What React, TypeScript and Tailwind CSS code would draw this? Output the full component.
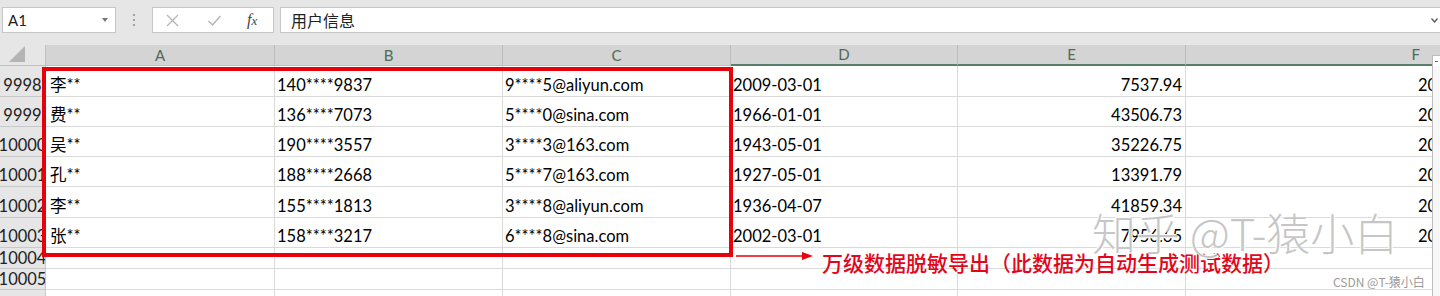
import React from 'react'

// Excel-like sheet with masked user data, a red highlight box and a caption

const rows = [
  { n: '9998', a: '李**', b: '140****9837', c: '9****5@aliyun.com', d: '2009-03-01', e: '7537.94', h: 'h-[31px]' },
  { n: '9999', a: '费**', b: '136****7073', c: '5****0@sina.com', d: '1966-01-01', e: '43506.73', h: 'h-[30px]' },
  { n: '10000', a: '吴**', b: '190****3557', c: '3****3@163.com', d: '1943-05-01', e: '35226.75', h: 'h-[30px]' },
  { n: '10001', a: '孔**', b: '188****2668', c: '5****7@163.com', d: '1927-05-01', e: '13391.79', h: 'h-[30px]' },
  { n: '10002', a: '李**', b: '155****1813', c: '3****8@aliyun.com', d: '1936-04-07', e: '41859.34', h: 'h-[31px]' },
  { n: '10003', a: '张**', b: '158****3217', c: '6****8@sina.com', d: '2002-03-01', e: '7956.65', h: 'h-[30px]' },
]

const emptyRows = [
  { n: '10004', h: 'h-[21px]' },
  { n: '10005', h: 'h-[21px]' },
  { n: '', h: 'h-[21px]' },
]

const cell = 'flex items-end shrink-0 border-r border-b border-[#dadada] px-[2px] pb-[1px] leading-[20px] whitespace-nowrap overflow-hidden'

function HeaderCell({ label, w, green }: { label: string; w: string; green?: boolean }) {
  return (
    <div
      className={`${w} shrink-0 h-full flex items-center justify-center bg-[#d4d4d4] border-r border-[#bcbcbc] text-[#4e6b59] text-[15px] ${
        green ? 'border-b-2 border-b-[#56806a]' : 'border-b border-b-[#c0c0c0]'
      }`}
    >
      {label}
    </div>
  )
}

export default function App() {
  return (
    <div className="relative w-[1440px] h-[296px] overflow-hidden bg-[#e6e6e6] font-[Lato,'Noto_Sans_CJK_SC',sans-serif] text-[16.5px] text-black">
      {/* --- Formula bar --- */}
      <div className="h-[45px] flex items-start pt-[7px] pl-[2px] text-[16px]">
        <div className="w-[114px] h-[26px] bg-white border border-[#c6c6c6] flex items-center justify-between pl-[5px] pr-[7px]">
          <span className="text-[15px] text-[#222]">A1</span>
          <svg width="6" height="4" viewBox="0 0 6 4">
            <path d="M0 0 L6 0 L3 4 Z" fill="#777" />
          </svg>
        </div>
        <div className="w-[36px] h-[26px] flex flex-col items-center justify-center gap-[3px]">
          <span className="w-[2px] h-[2px] bg-[#a0a0a0]" />
          <span className="w-[2px] h-[2px] bg-[#a0a0a0]" />
          <span className="w-[2px] h-[2px] bg-[#a0a0a0]" />
        </div>
        <div className="w-[122px] h-[26px] bg-white border border-[#c6c6c6] flex items-center pl-[12px]">
          <svg width="15" height="15" viewBox="0 0 15 15" className="mr-[27px]">
            <path d="M2 2 L13 13 M13 2 L2 13" stroke="#b5b5b5" strokeWidth="1.3" />
          </svg>
          <svg width="15" height="15" viewBox="0 0 15 15" className="mr-[25px]">
            <path d="M1.5 8 L5.5 12 L13.5 3" stroke="#b5b5b5" strokeWidth="1.5" fill="none" />
          </svg>
          <span className="font-['Liberation_Serif',serif] italic text-[16px] text-[#444] leading-none">
            f<span className="text-[13px]">x</span>
          </span>
        </div>
        <div className="ml-[6px] flex-1 h-[26px] bg-white border-y border-l border-[#c6c6c6] flex items-center justify-between pl-[10px] pr-[2px]">
          <span className="font-['Noto_Sans_CJK_SC',sans-serif] text-[16px] text-[#222]">用户信息</span>
          <svg width="7" height="5" viewBox="0 0 7 5">
            <path d="M0.5 0.5 L3.5 4 L6.5 0.5" stroke="#555" strokeWidth="1.2" fill="none" />
          </svg>
        </div>
      </div>

      {/* --- Column headers --- */}
      <div className="flex h-[21px]">
        <div className="w-[46px] shrink-0 h-full bg-[#e6e6e6] border-r border-b border-[#c0c0c0] flex items-end justify-end pr-[20px] pb-[3px]">
          <svg width="16" height="16" viewBox="0 0 16 16">
            <path d="M16 0 L16 16 L0 16 Z" fill="#b4b4b4" />
          </svg>
        </div>
        <HeaderCell label="A" w="w-[229px]" />
        <HeaderCell label="B" w="w-[228px]" />
        <HeaderCell label="C" w="w-[228px]" />
        <HeaderCell label="D" w="w-[227px]" green />
        <HeaderCell label="E" w="w-[228px]" green />
        <div className="w-[246px] shrink-0 h-full flex items-center justify-end pr-[12px] bg-[#d4d4d4] border-b-2 border-b-[#56806a] text-[#4e6b59] text-[15px]">
          F
        </div>
        <div className="flex-1 h-full bg-[#d4d4d4] flex items-end">
          <div className="w-full h-[11px] bg-white border-l border-t border-[#bdbdbd] flex items-center justify-center">
            <span className="w-[3px] h-[1px] bg-[#666]" />
          </div>
        </div>
      </div>

      {/* --- Data rows --- */}
      {rows.map((r) => (
        <div key={r.n} className={`flex ${r.h} bg-white`}>
          <div className="w-[46px] shrink-0 h-full bg-[#e6e6e6] border-r border-b border-[#c8c8c8] flex items-end justify-center pb-[1px] leading-[20px] overflow-hidden text-[#222]">
            <span className="whitespace-nowrap">{r.n}</span>
          </div>
          <div className={`${cell} w-[229px] pl-[4px]`}>{r.a}</div>
          <div className={`${cell} w-[228px]`}>{r.b}</div>
          <div className={`${cell} w-[228px]`}>{r.c}</div>
          <div className={`${cell} w-[227px]`}>{r.d}</div>
          <div className={`${cell} w-[228px] justify-end pr-[3px]`}>{r.e}</div>
          <div className={`${cell} w-[246px] border-r-0 pl-[232px]`}>2021-06-12</div>
          <div className="flex-1 h-full bg-[#f7f7f7] border-l border-[#bdbdbd]" />
        </div>
      ))}
      {emptyRows.map((r, i) => (
        <div key={i} className={`flex ${r.h} bg-white`}>
          <div className="w-[46px] shrink-0 h-full bg-[#e6e6e6] border-r border-b border-[#c8c8c8] flex items-end justify-center leading-[20px] overflow-hidden text-[#222]">
            <span className="whitespace-nowrap">{r.n}</span>
          </div>
          <div className={`${cell} w-[229px]`} />
          <div className={`${cell} w-[228px]`} />
          <div className={`${cell} w-[228px]`} />
          <div className={`${cell} w-[227px]`} />
          <div className={`${cell} w-[228px]`} />
          <div className={`${cell} w-[246px] border-r-0`} />
          <div className="flex-1 h-full bg-[#f7f7f7] border-l border-[#bdbdbd]" />
        </div>
      ))}

      {/* --- Red highlight box --- */}
      <div className="absolute left-[42px] top-[67px] w-[691px] h-[190px] border-4 border-[#e8000b] pointer-events-none" />

      {/* --- Arrow + caption --- */}
      <svg className="absolute left-[736px] top-[250px]" width="78" height="12" viewBox="0 0 78 12">
        <path d="M0 6 L68 6" stroke="#e8000b" strokeWidth="1.5" />
        <path d="M66 2 L77 6 L66 10 Z" fill="#e8000b" />
      </svg>
      <div className="absolute left-[822px] top-[249px] text-[21px] leading-[26px] text-[#e3061a] font-['Noto_Sans_CJK_SC',sans-serif] font-medium whitespace-nowrap">
        万级数据脱敏导出（此数据为自动生成测试数据）
      </div>

      {/* --- Watermarks --- */}
      <div className="absolute left-[1092px] top-[204px] text-[44px] leading-[56px] text-[#b4b4b4]/75 font-['Noto_Sans_CJK_SC',sans-serif] font-light whitespace-nowrap [text-shadow:1px_1px_0_#ffffff,-1px_-1px_0_#ffffff]">
        知乎 @T-猿小白
      </div>
      <div className="absolute left-[1333px] top-[274px] text-[12px] leading-[16px] text-[#9a9a9a] font-['Noto_Sans_CJK_SC',sans-serif] whitespace-nowrap">
        CSDN @T-猿小白
      </div>
    </div>
  )
}
